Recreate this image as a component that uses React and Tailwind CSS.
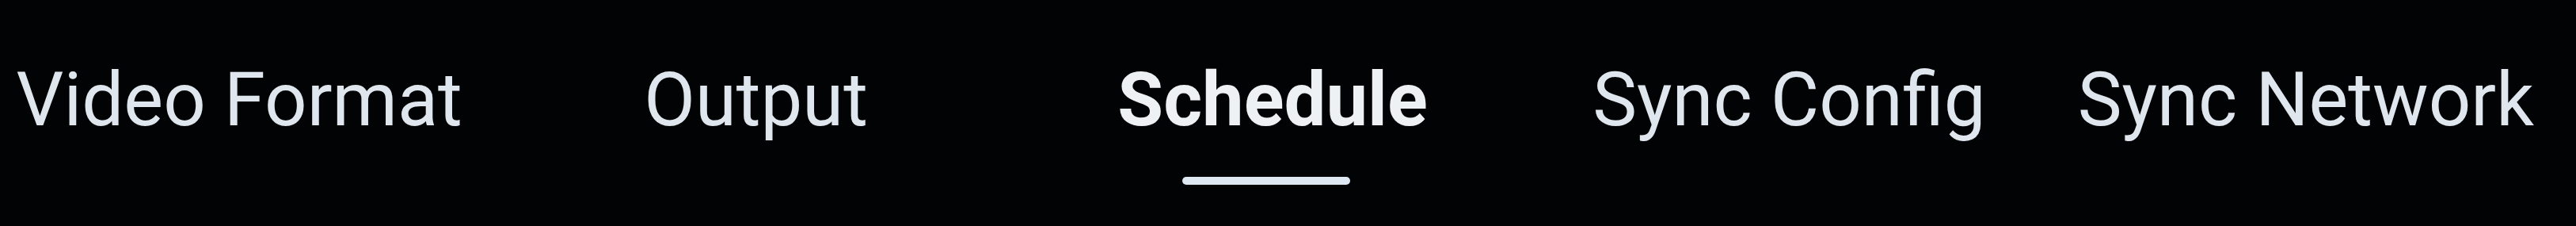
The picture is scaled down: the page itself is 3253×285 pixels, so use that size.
export default function App() {
  const tabs = ["Video Format", "Output", "Schedule", "Sync Config", "Sync Network"];
  const active = "Schedule";
  return (
    <div className="h-[285px] w-full overflow-hidden bg-[#020304]" style={{ fontFamily: "Roboto, 'Liberation Sans', sans-serif" }}>
      <nav className="-ml-[24px] grid w-[3262px] grid-cols-5 pt-[79px]">
        {tabs.map((t) => (
          <div key={t} className="flex flex-col items-center">
            <span
              className={
                "text-[94px] leading-none whitespace-nowrap " +
                (t === active ? "font-bold text-[#eef1f4]" : "font-normal text-[#dfe6ee]")
              }
            >
              {t}
            </span>
            {t === active && (
              <div className="mt-[50px] h-[10px] w-[212px] -translate-x-[8px] rounded-full bg-[#dde8f2]" />
            )}
          </div>
        ))}
      </nav>
    </div>
  );
}
